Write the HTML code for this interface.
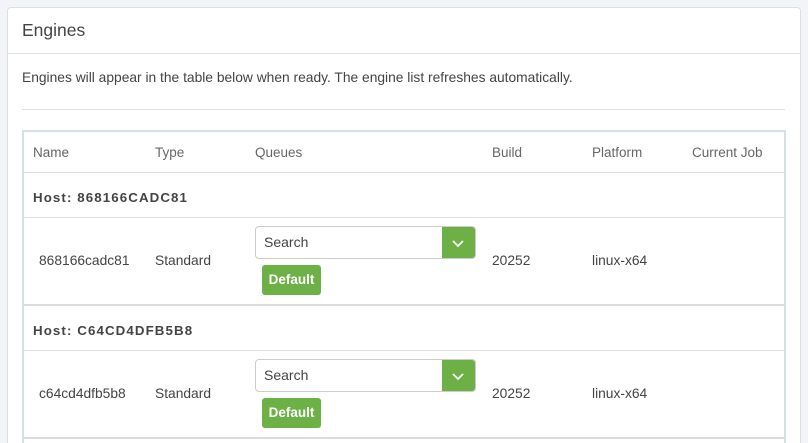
<!DOCTYPE html>
<html><head><style>
*{margin:0;padding:0;box-sizing:border-box}
html,body{width:808px;height:443px;overflow:hidden}
body{background:#f3f4f7;font-family:"Liberation Sans",sans-serif;color:#444;position:relative}
.a{position:absolute;white-space:nowrap}
.card{left:7px;top:7px;width:794px;height:445px;background:#fff;border:1px solid #dcdee2;border-radius:4px}
.hl{height:1px;background:#dddfe2}
.t{font-size:13.8px;color:#444}
.th{font-size:13.5px;color:#666}
.host{font-size:13.3px;font-weight:bold;letter-spacing:1.1px;color:#444}
.sel{width:221px;height:33px;border:1px solid #ccc;border-radius:4px;background:#fff;overflow:hidden}
.sel span{position:absolute;left:8px;top:7px;font-size:14px;color:#444}
.sel b{position:absolute;right:0;top:0;width:33px;height:33px;background:#6db046}
.def{width:59px;height:30px;background:#6db046;border-radius:3px;color:#fff;font-size:13.5px;font-weight:bold;text-align:center;line-height:30px}
</style></head><body>
<div class="a card"></div>
<div class="a" style="left:22px;top:20px;font-size:17.5px;color:#444">Engines</div>
<div class="a hl" style="left:8px;top:53px;width:792px"></div>
<div class="a t" style="left:22px;top:70px">Engines will appear in the table below when ready. The engine list refreshes automatically.</div>
<div class="a hl" style="left:22px;top:109px;width:763px"></div>
<div class="a" style="left:22px;top:130px;width:764px;height:330px;border:2px solid #d6e0e2;border-bottom:none"></div>
<div class="a th" style="left:33px;top:145px">Name</div>
<div class="a th" style="left:155px;top:145px">Type</div>
<div class="a th" style="left:255px;top:145px">Queues</div>
<div class="a th" style="left:492px;top:145px">Build</div>
<div class="a th" style="left:592px;top:145px">Platform</div>
<div class="a th" style="left:692px;top:145px">Current Job</div>
<div class="a hl" style="left:24px;top:172px;width:760px"></div>
<div class="a host" style="left:33px;top:190px">Host: 868166CADC81</div>
<div class="a hl" style="left:24px;top:217px;width:760px"></div>
<div class="a t" style="left:39px;top:253px">868166cadc81</div>
<div class="a t" style="left:155px;top:253px">Standard</div>
<div class="a sel" style="left:255px;top:226px"><span>Search</span><b><svg width="33" height="33"><path d="M11 14l5 5 5-5" stroke="#fff" stroke-width="1.8" fill="none"/></svg></b></div>
<div class="a def" style="left:262px;top:265px">Default</div>
<div class="a t" style="left:492px;top:253px">20252</div>
<div class="a t" style="left:592px;top:253px">linux-x64</div>
<div class="a" style="left:24px;top:304px;width:760px;height:2px;background:#d9dcdf"></div>
<div class="a host" style="left:33px;top:323px">Host: C64CD4DFB5B8</div>
<div class="a hl" style="left:24px;top:350px;width:760px"></div>
<div class="a t" style="left:39px;top:386px">c64cd4dfb5b8</div>
<div class="a t" style="left:155px;top:386px">Standard</div>
<div class="a sel" style="left:255px;top:359px"><span>Search</span><b><svg width="33" height="33"><path d="M11 14l5 5 5-5" stroke="#fff" stroke-width="1.8" fill="none"/></svg></b></div>
<div class="a def" style="left:262px;top:398px">Default</div>
<div class="a t" style="left:492px;top:386px">20252</div>
<div class="a t" style="left:592px;top:386px">linux-x64</div>
<div class="a" style="left:24px;top:437px;width:760px;height:2px;background:#d9dcdf"></div>
</body></html>
